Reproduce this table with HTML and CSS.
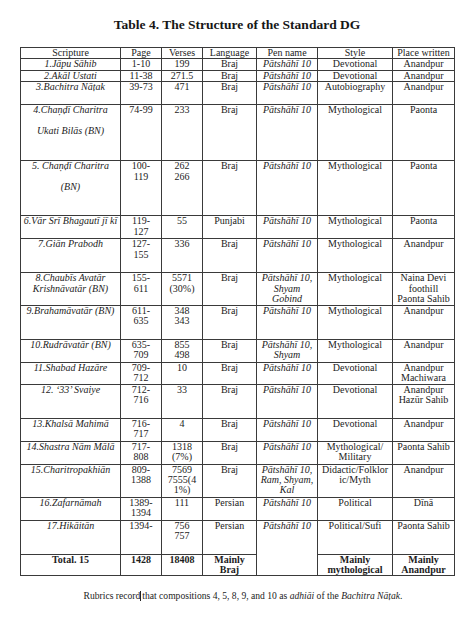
FILE: index.html
```html
<!DOCTYPE html>
<html lang="en">
<head>
<meta charset="utf-8">
<title>Table 4. The Structure of the Standard DG</title>
<link rel="stylesheet" href="styles.css">
</head>
<body>
<div class="page">
  <h1 class="title">Table 4. The Structure of the Standard DG</h1>
  <table class="dg">
    <colgroup>
      <col class="c-scr"><col class="c-page"><col class="c-verse"><col class="c-lang"><col class="c-pen"><col class="c-style"><col class="c-place">
    </colgroup>
    <thead>
      <tr class="h11">
        <th>Scripture</th><th>Page</th><th>Verses</th><th>Language</th><th>Pen name</th><th>Style</th><th>Place written</th>
      </tr>
    </thead>
    <tbody>
      <tr class="h12">
        <td class="it">1.Jāpu Sāhib</td><td>1-10</td><td>199</td><td>Braj</td><td class="it">Pātshāhī 10</td><td>Devotional</td><td>Anandpur</td>
      </tr>
      <tr class="h11">
        <td class="it">2.Akāl Ustati</td><td>11-38</td><td>271.5</td><td>Braj</td><td class="it">Pātshāhī 10</td><td>Devotional</td><td>Anandpur</td>
      </tr>
      <tr class="h23">
        <td class="it">3.Bachitra Nāṭak</td><td>39-73</td><td>471</td><td>Braj</td><td class="it">Pātshāhī 10</td><td>Autobiography</td><td>Anandpur</td>
      </tr>
      <tr class="h56">
        <td class="it">4.Chaṇḍī Charitra<br><br>Ukati Bilās (BN)</td><td>74-99</td><td>233</td><td>Braj</td><td class="it">Pātshāhī 10</td><td>Mythological</td><td>Paonta</td>
      </tr>
      <tr class="h55">
        <td class="it">5. Chaṇḍī Charitra<br><br>(BN)</td><td>100-<br>119</td><td>262<br>266</td><td>Braj</td><td class="it">Pātshāhī 10</td><td>Mythological</td><td>Paonta</td>
      </tr>
      <tr class="h23">
        <td class="it">6.Vār Srī Bhagautī jī kī</td><td>119-<br>127</td><td>55</td><td>Punjabi</td><td class="it">Pātshāhī 10</td><td>Mythological</td><td>Paonta</td>
      </tr>
      <tr class="h34">
        <td class="it">7.Giān Prabodh</td><td>127-<br>155</td><td>336</td><td>Braj</td><td class="it">Pātshāhī 10</td><td>Mythological</td><td>Anandpur</td>
      </tr>
      <tr class="h32">
        <td class="it">8.Chaubīs Avatār<br>Krishnāvatār (BN)</td><td>155-<br>611</td><td>5571<br>(30%)</td><td>Braj</td><td class="it">Pātshāhī 10,<br>Shyam<br>Gobind</td><td>Mythological</td><td>Naina Devi<br>foothill<br>Paonta Sahib</td>
      </tr>
      <tr class="h34">
        <td class="it">9.Brahamāvatār (BN)</td><td>611-<br>635</td><td>348<br>343</td><td>Braj</td><td class="it">Pātshāhī 10</td><td>Mythological</td><td>Anandpur</td>
      </tr>
      <tr class="h23">
        <td class="it">10.Rudrāvatār (BN)</td><td>635-<br>709</td><td>855<br>498</td><td>Braj</td><td class="it">Pātshāhī 10,<br>Shyam</td><td>Mythological</td><td>Anandpur</td>
      </tr>
      <tr class="h22">
        <td class="it">11.Shabad Hazāre</td><td>709-<br>712</td><td>10</td><td>Braj</td><td class="it">Pātshāhī 10</td><td>Devotional</td><td>Anandpur<br>Machiwara</td>
      </tr>
      <tr class="h34">
        <td class="it">12. ‘33’ Svaiye</td><td>712-<br>716</td><td>33</td><td>Braj</td><td class="it">Pātshāhī 10</td><td>Devotional</td><td>Anandpur<br>Hazūr Sahib</td>
      </tr>
      <tr class="h23">
        <td class="it">13.Khalsā Mahimā</td><td>716-<br>717</td><td>4</td><td>Braj</td><td class="it">Pātshāhī 10</td><td>Devotional</td><td>Anandpur</td>
      </tr>
      <tr class="h23">
        <td class="it">14.Shastra Nām Mālā</td><td>717-<br>808</td><td>1318<br>(7%)</td><td>Braj</td><td class="it">Pātshāhī 10</td><td>Mythological/<br>Military</td><td>Paonta Sahib</td>
      </tr>
      <tr class="h33">
        <td class="it">15.Charitropakhiān</td><td>809-<br>1388</td><td>7569<br>7555(4<br>1%)</td><td>Braj</td><td class="it">Pātshāhī 10,<br>Ram, Shyam,<br>Kal</td><td>Didactic/Folklor<br>ic/Myth</td><td>Anandpur</td>
      </tr>
      <tr class="h23">
        <td class="it">16.Zafarnāmah</td><td>1389-<br>1394</td><td>111</td><td>Persian</td><td class="it">Pātshāhī 10</td><td>Political</td><td>Dīnā</td>
      </tr>
      <tr class="h34">
        <td class="it">17.Hikāitān</td><td>1394-</td><td>756<br>757</td><td>Persian</td><td class="it" rowspan="2">Pātshāhī 10</td><td>Political/Sufi</td><td>Paonta Sahib</td>
      </tr>
      <tr class="h21 total">
        <td>Total. 15</td><td>1428</td><td>18408</td><td>Mainly<br>Braj</td><td>Mainly<br>mythological</td><td>Mainly<br>Anandpur</td>
      </tr>
    </tbody>
  </table>
  <p class="note">Rubrics record<span class="caret"></span>that compositions 4, 5, 8, 9, and 10 as <em>adhiāi</em> of the <em>Bachitra Nāṭak</em>.</p>
</div>
</body>
</html>
```
FILE: styles.css
```css
html, body {
  margin: 0;
  padding: 0;
  background: #ffffff;
}

.page {
  width: 474px;
  font-family: "Liberation Serif", "Times New Roman", serif;
  color: #1c1c1c;
}

.title {
  margin: 0;
  padding-top: 17px;
  height: 47px;
  box-sizing: border-box;
  font-size: 13.5px;
  line-height: 15px;
  font-weight: bold;
  text-align: center;
  color: #161616;
}

.dg {
  margin-left: 20px;
  width: 434px;
  border-collapse: collapse;
  table-layout: fixed;
  font-size: 10px;
  line-height: 10.4px;
}

.c-scr { width: 100px; }
.c-page { width: 41px; }
.c-verse { width: 41px; }
.c-lang { width: 54px; }
.c-pen { width: 61px; }
.c-style { width: 75px; }
.c-place { width: 62px; }

.dg th,
.dg td {
  border: 1px solid #3a3a3a;
  padding: 0 1px;
  vertical-align: top;
  text-align: center;
  white-space: nowrap;
  overflow: hidden;
}

.dg th {
  font-weight: normal;
  line-height: 10px;
}

.dg .it {
  font-style: italic;
}

.dg .total td {
  font-weight: bold;
  line-height: 10px;
}

.h11 { height: 11px; }
.h12 { height: 12px; }
.h21 { height: 21px; }
.h22 { height: 22px; }
.h23 { height: 23px; }
.h32 { height: 32px; }
.h33 { height: 33px; }
.h34 { height: 34px; }
.h55 { height: 55px; }
.h56 { height: 56px; }

.note {
  margin: 14px 0 0;
  padding-left: 12px;
  font-size: 9.6px;
  line-height: 12px;
  text-align: center;
  color: #1c1c1c;
}

.caret {
  display: inline-block;
  width: 1px;
  height: 10px;
  margin: 0 1px 0 0;
  vertical-align: -2px;
  background: #222;
}
```
